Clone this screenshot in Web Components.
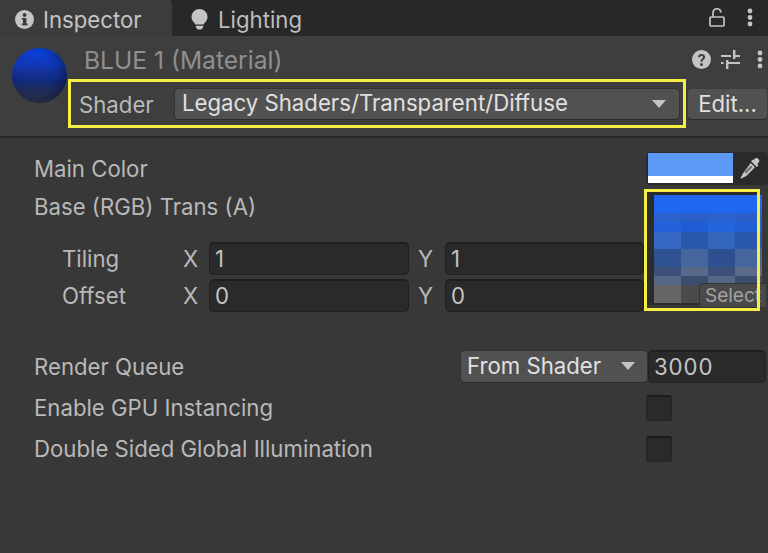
<!DOCTYPE html>
<html>
<head>
<meta charset="utf-8">
<style>
  html,body{margin:0;padding:0;background:#383838;}
  body{width:768px;height:553px;overflow:hidden;font-family:Inter,"Liberation Sans",sans-serif;font-size:22.2px;color:#b9b9b9;}
</style>
</head>
<body>
<ins-window>
  <ins-tabbar></ins-tabbar>
  <ins-header></ins-header>
  <ins-body></ins-body>
</ins-window>

<script>
class InsWindow extends HTMLElement {
  constructor() {
    super();
    this.attachShadow({ mode: 'open' });
    this.shadowRoot.innerHTML = `
      <style>
        :host{display:flex;flex-direction:column;width:768px;height:553px;overflow:hidden;}
      </style>
      <slot></slot>`;
  }
}

class InsTabbar extends HTMLElement {
  constructor() {
    super();
    this.attachShadow({ mode: 'open' });
    this.shadowRoot.innerHTML = `
      <style>
        :host{display:flex;height:36px;background:#282828;align-items:stretch;flex:none;}
        .tab{display:flex;align-items:center;gap:9px;box-sizing:border-box;height:36px;padding:2px 0 0 15px;}
        .tab.on{width:172px;background:#3c3c3c;border-radius:0 4px 0 0;color:#c4c4c4;}
        .tab.off{padding-left:19px;color:#bdbdbd;gap:10px;}
        .right{margin-left:auto;display:flex;align-items:center;gap:22px;padding:0 15px 2px 0;}
        svg{display:block;}
      </style>
      <div class="tab on">
        <svg width="19" height="19" viewBox="0 0 19 19"><circle cx="9.5" cy="9.5" r="9.5" fill="#c4c4c4"/><rect x="8" y="8" width="3.4" height="7.2" fill="#3c3c3c"/><rect x="6.8" y="8" width="2" height="1.6" fill="#3c3c3c"/><rect x="6.8" y="13.6" width="5.8" height="1.6" fill="#3c3c3c"/><circle cx="9.6" cy="5" r="1.9" fill="#3c3c3c"/></svg>
        <span>Inspector</span>
      </div>
      <div class="tab off">
        <svg width="17" height="21" viewBox="0 0 17 21"><path d="M8.5 0a8 8 0 0 1 8 8c0 3-1.7 4.6-3 6-.4.5-.7 1-.7 1.5H4.2c0-.5-.3-1-.7-1.5-1.3-1.4-3-3-3-6a8 8 0 0 1 8-8z" fill="#c4c4c4"/><path d="M4.6 16.8h7.8l-.6 2.2-1.8 1.6H7L5.2 19z" fill="#c4c4c4"/></svg>
        <span>Lighting</span>
      </div>
      <div class="right">
        <svg width="16" height="19" viewBox="0 0 16 19" fill="none" stroke="#c4c4c4" stroke-width="1.7"><rect x="1" y="9" width="14" height="9" rx="1"/><path d="M4 9V5a4 4 0 0 1 8 -.5"/></svg>
        <svg width="6" height="19" viewBox="0 0 6 19" fill="#c4c4c4"><circle cx="3" cy="3" r="2.4"/><circle cx="3" cy="9.5" r="2.4"/><circle cx="3" cy="16" r="2.4"/></svg>
      </div>`;
  }
}

class InsDropdown extends HTMLElement {
  constructor() {
    super();
    this.attachShadow({ mode: 'open' });
    this.shadowRoot.innerHTML = `
      <style>
        :host{display:flex;align-items:center;justify-content:space-between;box-sizing:border-box;height:30px;background:#515151;border-radius:4px;box-shadow:0 1px 0 #2b2b2b,0 0 0 1px #333;color:#e0e0e0;padding:0 13px 2px 7px;}
        i{display:block;width:0;height:0;border-left:7px solid transparent;border-right:7px solid transparent;border-top:8px solid #c4c4c4;margin-top:2px;}
      </style>
      <span><slot></slot></span><i></i>`;
  }
}

class InsHeader extends HTMLElement {
  constructor() {
    super();
    this.attachShadow({ mode: 'open' });
    this.shadowRoot.innerHTML = `
      <style>
        :host{display:grid;grid-template-columns:68px 1fr;box-sizing:border-box;height:102px;flex:none;background:#3e3e3e;border-bottom:2px solid #292929;}
        .ball{width:55px;height:55px;margin:12px 0 0 12px;border-radius:50%;
          background:
            radial-gradient(ellipse 45% 16% at 50% 4%,#0a44e6 0,rgba(10,68,230,0) 100%),
            linear-gradient(#0f3dd0 0,#1138bc 30%,#12329c 42%,#12297a 62%,#1f2c5c 74%,#2c3249 100%);
          box-shadow:inset -5px -2px 8px rgba(10,15,40,.45);}
        .main{min-width:0;display:flex;flex-direction:column;}
        .title{display:flex;align-items:center;height:43px;box-sizing:border-box;padding:4px 5px 0 16px;color:#8f8f8f;font-size:24.6px;}
        .title span{flex:1;}
        .tools{display:flex;align-items:center;gap:12px;}
        .tools svg:first-child{margin-right:-1px;transform:translateX(1px);}
        .tools svg:last-child{margin-left:5px;}
        svg{display:block;}
        .row{display:flex;align-items:center;gap:2px;}
        .shader{box-sizing:border-box;width:618px;height:49px;border:3px solid #f4ef45;display:flex;align-items:center;padding:0 4px 0 8px;color:#b9b9b9;}
        .shader .lab{width:96px;flex:none;padding-top:1px;}
        .shader ins-dropdown{flex:1;}
        .edit{box-sizing:border-box;width:79px;height:30px;background:#515151;border-radius:4px;box-shadow:0 1px 0 #2b2b2b;color:#e0e0e0;text-align:center;line-height:29px;margin-left:0;}
      </style>
      <div><div class="ball"></div></div>
      <div class="main">
        <div class="title"><span>BLUE 1 (Material)</span>
          <div class="tools">
            <svg width="19" height="19" viewBox="0 0 19 19"><circle cx="9.5" cy="9.5" r="9.5" fill="#c4c4c4"/><path d="M6 7.3c0-2 1.6-3.2 3.6-3.2s3.5 1.1 3.5 3c0 2.6-2.6 2.5-2.6 4.6H8.4c0-3 2.5-3 2.5-4.5 0-.7-.5-1.2-1.3-1.2s-1.4.5-1.5 1.3z" fill="#3e3e3e"/><circle cx="9.5" cy="14.5" r="1.5" fill="#3e3e3e"/></svg>
            <svg width="19" height="19" viewBox="0 0 19 19" fill="#c4c4c4"><rect x="0" y="5" width="10" height="2"/><rect x="12" y="0" width="2.4" height="9"/><rect x="14" y="5" width="5" height="2"/><rect x="0" y="12" width="2.5" height="2"/><rect x="5" y="10" width="2.4" height="9"/><rect x="7" y="12" width="12" height="2"/></svg>
            <svg width="6" height="19" viewBox="0 0 6 19" fill="#c4c4c4"><circle cx="3" cy="3" r="2.4"/><circle cx="3" cy="9.5" r="2.4"/><circle cx="3" cy="16" r="2.4"/></svg>
          </div>
        </div>
        <div class="row">
          <div class="shader"><span class="lab">Shader</span><ins-dropdown>Legacy Shaders/Transparent/Diffuse</ins-dropdown></div>
          <div class="edit">Edit...</div>
        </div>
      </div>`;
  }
}

class InsField extends HTMLElement {
  constructor() {
    super();
    this.attachShadow({ mode: 'open' });
    this.shadowRoot.innerHTML = `
      <style>
        :host{display:block;box-sizing:border-box;height:33px;background:#2a2a2a;border:1px solid #212121;border-top:2px solid #1f1f1f;border-radius:5px;color:#c4c4c4;padding:0 5px;line-height:29px;}
      </style>
      <slot></slot>`;
  }
}

class InsCheck extends HTMLElement {
  constructor() {
    super();
    this.attachShadow({ mode: 'open' });
    this.shadowRoot.innerHTML = `
      <style>
        :host{display:block;box-sizing:border-box;width:26px;height:26px;background:#2a2a2a;border:1px solid #232323;border-top:2px solid #1c1c1c;border-radius:3px;}
      </style>`;
  }
}

class InsSwatch extends HTMLElement {
  constructor() {
    super();
    this.attachShadow({ mode: 'open' });
    this.shadowRoot.innerHTML = `
      <style>
        :host{display:flex;box-sizing:border-box;width:122px;height:33px;background:#2a2a2a;border-radius:5px;padding:1px;margin-left:2px;flex:none;}
        .c{width:85px;margin:0 0 1px 1px;background:linear-gradient(#5f99f8 0 23px,#fff 23px);}
        .p{flex:1;display:flex;align-items:center;justify-content:center;}
      </style>
      <div class="c"></div>
      <div class="p">
        <svg width="22" height="22" viewBox="0 0 22 22"><path d="M14 2.5l1.2-1.2a2.5 2.5 0 0 1 4.5 3.2L18.2 6l1.3 1.3-1.7 1.7-5.800-5.800 1.700-1.700z" fill="#c8c8c8"/><path d="M11.700 5l4.300 4.300-8.500 8.500c-1 1-2 1.200-3 1.500l-1.800 1.500-1.200-1.200 1.500-1.800c.3-1 .5-2 1.500-3z" fill="#c8c8c8"/><path d="M12 7.500l1.600 1.600-6.600 6.600-1.600-1.600z" fill="#6f6f6f"/></svg>
      </div>`;
  }
}

class InsTexture extends HTMLElement {
  constructor() {
    super();
    this.attachShadow({ mode: 'open' });
    this.shadowRoot.innerHTML = `
      <style>
        :host{display:block;position:relative;box-sizing:border-box;width:124px;height:122px;flex:none;color:#a8a8a8;}
        .well{position:absolute;left:3px;top:3px;width:113px;height:113px;background:#2c2c2c;}
        .tex{position:absolute;left:10px;top:6px;width:108px;display:grid;grid-template-columns:repeat(4,27px);}
        .tex div{height:var(--h);}
        .solid{grid-column:1 / 5;}
        .select{position:absolute;left:56px;top:95px;width:66px;height:23px;box-sizing:border-box;background:#4a4a4a;border-radius:3px 0 0 3px;padding-left:5px;font-size:19px;line-height:23px;overflow:hidden;white-space:nowrap;box-shadow:0 0 0 1px #333;opacity:.95;}
        .frame{position:absolute;left:0;top:0;width:116px;height:122px;box-sizing:border-box;border:3px solid #f4ef45;}
      </style>
      <div class="well"></div>
      <div class="tex"></div>
      <div class="select">Select</div>
      <div class="frame"></div>`;
    const rows = [
      [18, ['#1f66f0']],
      [9, ['#2a62d0', '#2a5fc8', '#2a62d0', '#2a5fc8']],
      [10, ['#2362dc', '#1f5dd6', '#2565dc', '#2160d4']],
      [17, ['#3466c2', '#2a58ac', '#3466bc', '#2a58ac']],
      [18, ['#2e5292', '#44659e', '#2e5090', '#44659e']],
      [9, ['#3b4f78', '#59698a', '#3b4f78', '#596a8a']],
      [9, ['#566785', '#3c4d70', '#566785', '#3c4d70']],
      [18, ['#666666', '#4a4a4a', '#4a4a4a', '#4a4a4a']]
    ];
    const tex = this.shadowRoot.querySelector('.tex');
    rows.forEach(([h, colors]) => {
      colors.forEach(c => {
        const cell = document.createElement('div');
        cell.style.setProperty('--h', h + 'px');
        cell.style.background = c;
        if (colors.length === 1) cell.className = 'solid';
        tex.appendChild(cell);
      });
    });
  }
}

class InsBody extends HTMLElement {
  constructor() {
    super();
    this.attachShadow({ mode: 'open' });
    this.shadowRoot.innerHTML = `
      <style>
        :host{display:block;flex:1;background:#383838;}
        .top{display:grid;grid-template-columns:644px 124px;padding-top:11px;height:164px;}
        .left{padding-left:34px;}
        .lab{height:38px;display:flex;align-items:center;}
        .pairs{margin-top:15px;}
        .xy{display:grid;grid-template-columns:121px 26px 200px 36px 199px;align-items:center;height:37px;margin-left:28px;}
        .right{display:flex;flex-direction:column;gap:4px;margin-top:3px;}
        .rq{display:grid;grid-template-columns:427px 186px 119px;padding:34px 0 0 34px;height:38px;align-items:center;}
        .rq ins-dropdown{height:31px;padding-left:6px;padding-right:12px;}
        .rq ins-field{margin-left:1px;}
        .ck{display:grid;grid-template-columns:612px 26px;padding-left:34px;height:41px;align-items:center;}
        .num{letter-spacing:.9px;}
      </style>
      <div class="top">
        <div class="left">
          <div class="lab">Main Color</div>
          <div class="lab">Base (RGB) Trans (A)</div>
          <div class="pairs">
            <div class="xy"><span>Tiling</span><span>X</span><ins-field>1</ins-field><span style="padding-left:9px">Y</span><ins-field>1</ins-field></div>
            <div class="xy"><span>Offset</span><span>X</span><ins-field>0</ins-field><span style="padding-left:9px">Y</span><ins-field>0</ins-field></div>
          </div>
        </div>
        <div class="right">
          <ins-swatch></ins-swatch>
          <ins-texture></ins-texture>
        </div>
      </div>
      <div class="rq"><span>Render Queue</span><ins-dropdown>From Shader</ins-dropdown><ins-field class="num">3000</ins-field></div>
      <div class="ck" style="margin-top:2px"><span>Enable GPU Instancing</span><ins-check></ins-check></div>
      <div class="ck"><span>Double Sided Global Illumination</span><ins-check></ins-check></div>`;
  }
}

customElements.define('ins-window', InsWindow);
customElements.define('ins-tabbar', InsTabbar);
customElements.define('ins-dropdown', InsDropdown);
customElements.define('ins-header', InsHeader);
customElements.define('ins-field', InsField);
customElements.define('ins-check', InsCheck);
customElements.define('ins-swatch', InsSwatch);
customElements.define('ins-texture', InsTexture);
customElements.define('ins-body', InsBody);
</script>
</body>
</html>
